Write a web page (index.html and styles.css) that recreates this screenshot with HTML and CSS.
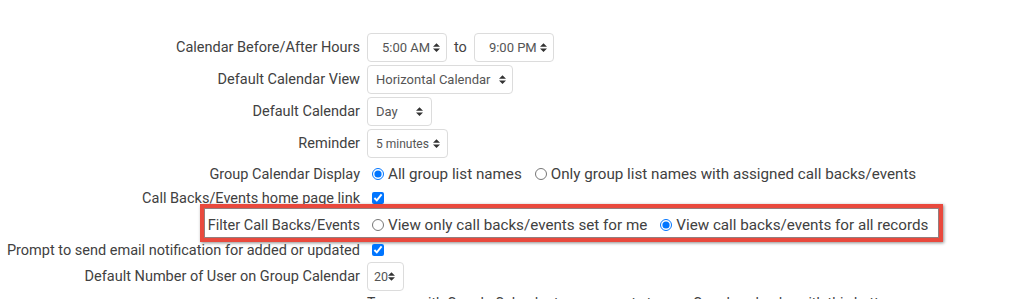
FILE: index.html
```html
<!DOCTYPE html>
<html lang="en">
<head>
  <meta charset="UTF-8" />
  <meta name="viewport" content="width=device-width, initial-scale=1.0"/>
  <title>Calendar Settings</title>
  <link rel="stylesheet" href="styles.css">
</head>
<body>
  <div class="settings">
    <div class="row row-select">
      <div class="label">Calendar Before/After Hours</div>
      <div class="controls">
        <div class="select sel-time"><span>5:00 AM</span><svg class="arrows" viewBox="0 0 8 10"><path d="M0 4L4 0L8 4Z M0 6L4 10L8 6Z"/></svg></div>
        <span class="sep">to</span>
        <div class="select sel-time"><span>9:00 PM</span><svg class="arrows" viewBox="0 0 8 10"><path d="M0 4L4 0L8 4Z M0 6L4 10L8 6Z"/></svg></div>
      </div>
    </div>

    <div class="row row-select">
      <div class="label">Default Calendar View</div>
      <div class="controls">
        <div class="select sel-view"><span>Horizontal Calendar</span><svg class="arrows" viewBox="0 0 8 10"><path d="M0 4L4 0L8 4Z M0 6L4 10L8 6Z"/></svg></div>
      </div>
    </div>

    <div class="row row-select">
      <div class="label">Default Calendar</div>
      <div class="controls">
        <div class="select sel-day"><span>Day</span><svg class="arrows" viewBox="0 0 8 10"><path d="M0 4L4 0L8 4Z M0 6L4 10L8 6Z"/></svg></div>
      </div>
    </div>

    <div class="row row-select">
      <div class="label">Reminder</div>
      <div class="controls">
        <div class="select sel-small"><span>5 minutes</span><svg class="arrows" viewBox="0 0 8 10"><path d="M0 4L4 0L8 4Z M0 6L4 10L8 6Z"/></svg></div>
      </div>
    </div>

    <div class="row row-check first-check">
      <div class="label">Group Calendar Display</div>
      <div class="controls">
        <label class="opt"><input type="radio" name="groupDisplay" checked> All group list names</label>
        <label class="opt"><input type="radio" name="groupDisplay"> Only group list names with assigned call backs/events</label>
      </div>
    </div>

    <div class="row row-check">
      <div class="label">Call Backs/Events home page link</div>
      <div class="controls">
        <input type="checkbox" checked>
      </div>
    </div>

    <div class="row row-check row-filter">
      <div class="highlight"></div>
      <div class="label">Filter Call Backs/Events</div>
      <div class="controls">
        <label class="opt"><input type="radio" name="filter"> View only call backs/events set for me</label>
        <label class="opt"><input type="radio" name="filter" checked> View call backs/events for all records</label>
      </div>
    </div>

    <div class="row row-check">
      <div class="label">Prompt to send email notification for added or updated</div>
      <div class="controls">
        <input type="checkbox" checked>
      </div>
    </div>

    <div class="row row-select last-select">
      <div class="label">Default Number of User on Group Calendar</div>
      <div class="controls">
        <div class="select sel-num"><span>20</span><svg class="arrows" viewBox="0 0 8 10"><path d="M0 4L4 0L8 4Z M0 6L4 10L8 6Z"/></svg></div>
      </div>
    </div>

    <div class="row row-note">
      <div class="label"></div>
      <div class="note">Turn on with Google Calendar to sync events to your Google calendar with this button</div>
    </div>
  </div>
</body>
</html>
```

FILE: styles.css
```css
body {
  margin: 0;
  font-family: Roboto, "Liberation Sans", sans-serif;
  font-size: 14.5px;
  color: #414141;
  background: #fff;
  overflow: hidden;
}

.settings {
  padding-top: 33px;
}

.row {
  position: relative;
  display: grid;
  grid-template-columns: 360px 1fr;
  column-gap: 7px;
  align-items: center;
}

.label {
  text-align: right;
  white-space: nowrap;
}

.controls {
  display: flex;
  align-items: center;
  white-space: nowrap;
}

.row-select {
  height: 29px;
  margin-bottom: 3px;
}

.row-check {
  height: 24px;
}

.first-check {
  margin-top: 4px;
}

.row-filter {
  height: 26px;
  margin-top: 2px;
}

.last-select {
  margin-top: 0;
}

.select {
  box-sizing: border-box;
  height: 29px;
  display: inline-flex;
  align-items: center;
  justify-content: space-between;
  border: 1px solid #dcdcdc;
  border-radius: 4px;
  padding: 0 6px 0 8px;
  font-size: 13px;
  color: #555;
}

.sel-time { width: 80px; padding-left: 14px; }
.sel-view { width: 146px; }
.sel-day { width: 65px; padding-right: 8px; }
.sel-small { width: 81px; font-size: 12px; padding-right: 7px; }
.sel-num { width: 37px; padding: 0 8px 0 6px; font-size: 12.5px; }

.arrows {
  width: 7px;
  height: 9px;
  fill: #333;
}

.sep {
  margin: 0 7px;
  color: #444;
}

.opt {
  display: inline-flex;
  align-items: center;
  margin-right: 8px;
  font-size: 15.2px;
}

input[type="radio"],
input[type="checkbox"] {
  width: 12px;
  height: 12px;
  margin: 0 4px 0 5px;
}

.highlight {
  position: absolute;
  left: 200px;
  width: 743px;
  top: -8px;
  bottom: -4px;
  box-sizing: border-box;
  border: 4px solid #e9493d;
  box-shadow: inset 0 0 0 1px rgba(60, 20, 20, 0.55), 1px 1px 3px rgba(0, 0, 0, 0.45);
  pointer-events: none;
}

.note {
  font-size: 14px;
  padding-top: 1px;
}
```
